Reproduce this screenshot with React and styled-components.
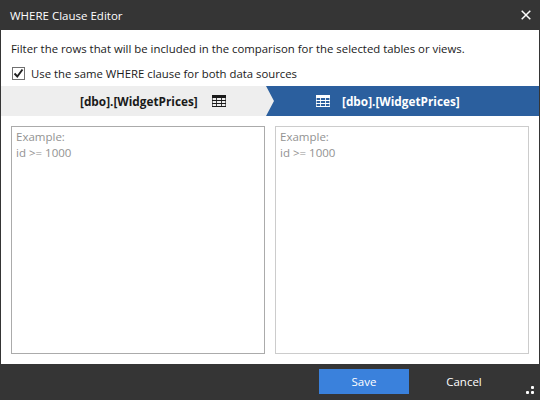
import React from "react";
import styled, { createGlobalStyle } from "styled-components";

const Global = createGlobalStyle`
  html, body { margin: 0; padding: 0; background: #353535; }
  body { font-family: "Open Sans", "Noto Sans", sans-serif; font-size: 12px; }
`;
const Dialog = styled.div`
  width: 540px; height: 400px; display: flex; flex-direction: column;
  background: #353535; overflow: hidden;
`;
const TitleBar = styled.div`
  height: 30px; flex: none; display: flex; align-items: center; justify-content: space-between;
  padding: 0 9px 0 10px; color: #fff; font-size: 11.5px; box-sizing: border-box;
`;
const CloseButton = styled.button`
  border: 0; background: none; padding: 0; width: 10px; height: 10px; display: flex;
`;
const Body = styled.div`
  flex: none; height: 334px; margin: 0 1px; background: #fff; display: flex; flex-direction: column;
`;
const Description = styled.div`
  height: 19px; margin-top: 9px; padding-left: 10px; line-height: 19px; color: #1a1a1a; font-size: 11.37px; white-space: nowrap;
`;
const CheckRow = styled.label`
  height: 20px; margin-top: 5px; padding-left: 11px; display: flex; align-items: center; gap: 6px; color: #1a1a1a; font-size: 11.35px; white-space: nowrap;
`;
const CheckBox = styled.span`
  width: 13px; height: 13px; box-sizing: border-box; border: 1px solid #707070; background: #fff; display: flex; align-items: center; justify-content: center;
`;
const Tabs = styled.div`
  height: 30px; margin-top: 3px; display: flex; flex: none; background: #2b5f9e;
`;
const Tab = styled.div`
  flex: ${p => (p.$active ? "1" : "none")};
  width: ${p => (p.$active ? "auto" : "273px")};
  display: flex; align-items: center; box-sizing: border-box;
  font-weight: 700; font-size: 11.8px; white-space: nowrap;
  background: ${p => (p.$active ? "#2b5f9e" : "#eeeeee")};
  color: ${p => (p.$active ? "#fff" : "#1a1a1a")};
  padding-left: ${p => (p.$active ? "42px" : "79px")};
  gap: ${p => (p.$active ? "12px" : "14px")};
  clip-path: ${p => (p.$active ? "none" : "polygon(0 0, 265px 0, 100% 50%, 265px 100%, 0 100%)")};
`;
const Editors = styled.div`
  flex: 1; display: grid; grid-template-columns: 254px 254px; gap: 10px; padding: 10px;
`;
const Editor = styled.div`
  box-sizing: border-box; border: 1px solid ${p => (p.$disabled ? "#cccccc" : "#ababab")};
  padding: 2px 4px; color: #929292; font-size: 11.5px; line-height: 15.5px; white-space: pre-line; background: #fff;
`;
const Footer = styled.div`
  flex: 1; position: relative; display: flex; justify-content: flex-end; align-items: flex-start; gap: 10px; padding: 5px 31px 0 0;
`;
const SaveButton = styled.button`
  width: 90px; height: 25px; border: 0; background: #3a81dc; color: #fff; font: inherit; font-size: 11.5px; padding: 0;
`;
const CancelButton = styled.button`
  width: 90px; height: 25px; border: 0; background: none; color: #fff; font: inherit; font-size: 11.5px; padding: 0;
`;
const Grip = styled.svg`
  position: absolute; right: 6px; bottom: 6px; width: 8px; height: 8px;
`;

const TableIcon = ({ color }) => (
  <svg width="14" height="12" viewBox="0 0 14 12">
    <rect x="0" y="0" width="14" height="3" fill={color} />
    <path d="M0.5 3v9M13.5 3v9" stroke={color} strokeOpacity="0.6" fill="none" />
    <path d="M4.5 3v9M9.5 3v9" stroke={color} strokeOpacity="0.85" fill="none" />
    <path d="M0 5.5h14M0 8.5h14M0 11.5h14" stroke={color} fill="none" />
  </svg>
);

export default function App() {
  return (
    <Dialog>
      <Global />
      <TitleBar>
        WHERE Clause Editor
        <CloseButton aria-label="Close">
          <svg width="10" height="10" viewBox="0 0 10 10">
            <path d="M0.7 0.7l8.6 8.6M9.3 0.7l-8.6 8.6" stroke="#fff" strokeWidth="1.5" fill="none" />
          </svg>
        </CloseButton>
      </TitleBar>
      <Body>
        <Description>Filter the rows that will be included in the comparison for the selected tables or views.</Description>
        <CheckRow>
          <CheckBox>
            <svg width="11" height="11" viewBox="0 0 11 11">
              <path d="M1.5 5.5l2.8 3 5.2-7" stroke="#222" strokeWidth="1.9" fill="none" />
            </svg>
          </CheckBox>
          Use the same WHERE clause for both data sources
        </CheckRow>
        <Tabs>
          <Tab>
            [dbo].[WidgetPrices]
            <TableIcon color="#1a1a1a" />
          </Tab>
          <Tab $active>
            <TableIcon color="#fff" />
            [dbo].[WidgetPrices]
          </Tab>
        </Tabs>
        <Editors>
          <Editor>{"Example:\nid >= 1000"}</Editor>
          <Editor $disabled>{"Example:\nid >= 1000"}</Editor>
        </Editors>
      </Body>
      <Footer>
        <SaveButton>Save</SaveButton>
        <CancelButton>Cancel</CancelButton>
        <Grip viewBox="0 0 8 8">
          <g fill="#fff">
            <rect x="5" y="0" width="3" height="3" rx="1" />
            <rect x="0" y="5" width="3" height="3" rx="1" />
            <rect x="5" y="5" width="3" height="3" rx="1" />
          </g>
        </Grip>
      </Footer>
    </Dialog>
  );
}
